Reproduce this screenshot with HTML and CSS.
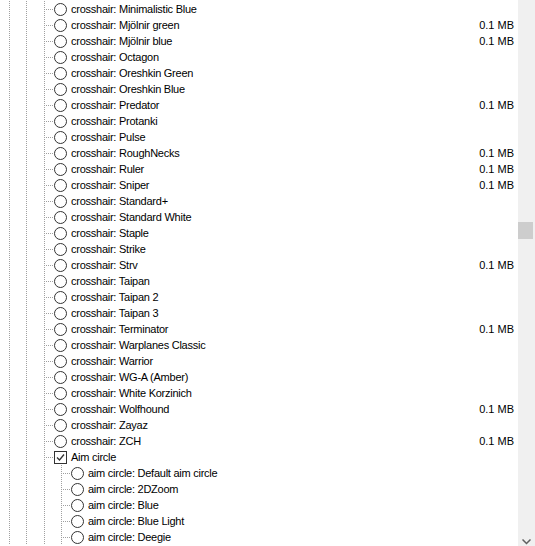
FILE: index.html
```html
<!DOCTYPE html>
<html lang="en">
<head>
    <meta charset="UTF-8">
    <title>Mod tree</title>
    <link rel="stylesheet" href="styles.css">
</head>
<body>
    <div class="panel">
        <div class="tree" id="tree"></div>
        <div class="scrollbar">
            <div class="track"><div class="thumb"></div></div>
            <div class="arrow">
                <svg width="9" height="6" viewBox="0 0 9 6"><path d="M0.5 0.5 L4.5 4.5 L8.5 0.5" fill="none" stroke="#606060" stroke-width="1.5"/></svg>
            </div>
        </div>
    </div>

    <script>
        const crosshairs = [
            ['Minimalistic Blue', ''], ['Mjölnir green', '0.1 MB'], ['Mjölnir blue', '0.1 MB'],
            ['Octagon', ''], ['Oreshkin Green', ''], ['Oreshkin Blue', ''], ['Predator', '0.1 MB'],
            ['Protanki', ''], ['Pulse', ''], ['RoughNecks', '0.1 MB'], ['Ruler', '0.1 MB'],
            ['Sniper', '0.1 MB'], ['Standard+', ''], ['Standard White', ''], ['Staple', ''],
            ['Strike', ''], ['Strv', '0.1 MB'], ['Taipan', ''], ['Taipan 2', ''], ['Taipan 3', ''],
            ['Terminator', '0.1 MB'], ['Warplanes Classic', ''], ['Warrior', ''], ['WG-A (Amber)', ''],
            ['White Korzinich', ''], ['Wolfhound', '0.1 MB'], ['Zayaz', ''], ['ZCH', '0.1 MB']
        ];
        const aimCircles = ['Default aim circle', '2DZoom', 'Blue', 'Blue Light', 'Deegie'];

        const checkSvg = '<svg width="11" height="11" viewBox="0 0 11 11"><path d="M2 5.5 L4.5 8 L9 2.5" fill="none" stroke="#333" stroke-width="1.3"/></svg>';

        function row(guides, box, label, size) {
            let html = '<div class="row">';
            guides.forEach(g => { html += `<span class="guide ${g}"></span>`; });
            html += box === 'check' ? `<span class="check">${checkSvg}</span>` : '<span class="radio"></span>';
            html += `<span class="label">${label}</span>`;
            html += `<span class="size">${size}</span></div>`;
            return html;
        }

        let out = '';
        crosshairs.forEach(([name, size]) => {
            out += row(['line', 'line', 'tee'], 'radio', 'crosshair: ' + name, size);
        });
        out += row(['line', 'line', 'tee'], 'check', 'Aim circle', '');
        aimCircles.forEach(name => {
            out += row(['line', 'line', 'line', 'tee sub'], 'radio', 'aim circle: ' + name, '');
        });
        document.getElementById('tree').innerHTML = out;
    </script>
</body>
</html>
```

FILE: styles.css
```css
body {
    margin: 0;
    font-family: "Liberation Sans", Arial, sans-serif;
    font-size: 11px;
    color: #000;
    background: #fff;
}
.panel {
    display: flex;
    height: 546px;
    overflow: hidden;
}
.tree {
    flex: 1;
    padding-top: 1px;
}
.row {
    display: flex;
    align-items: center;
    height: 16px;
}
.guide {
    width: 18px;
    height: 16px;
    flex-shrink: 0;
    background: repeating-linear-gradient(#a0a0a0 0 1px, transparent 1px 2px) 9px 0 / 1px 16px no-repeat;
}
.guide:first-child {
    width: 17px;
}
.guide.tee {
    background:
        repeating-linear-gradient(#a0a0a0 0 1px, transparent 1px 2px) 9px 0 / 1px 16px no-repeat,
        repeating-linear-gradient(to right, #a0a0a0 0 1px, transparent 1px 2px) 9px 8px / 9px 1px no-repeat;
}
.guide.sub {
    width: 17px;
    background:
        repeating-linear-gradient(#a0a0a0 0 1px, transparent 1px 2px) 8px 0 / 1px 16px no-repeat,
        repeating-linear-gradient(to right, #a0a0a0 0 1px, transparent 1px 2px) 8px 8px / 9px 1px no-repeat;
}
.radio {
    width: 11px;
    height: 11px;
    border: 1px solid #333;
    border-radius: 50%;
    margin-left: 1px;
    flex-shrink: 0;
}
.check {
    display: flex;
    align-items: center;
    justify-content: center;
    width: 11px;
    height: 11px;
    border: 1px solid #333;
    margin-left: 1px;
    flex-shrink: 0;
}
.label {
    flex: 1;
    margin-left: 4px;
    white-space: nowrap;
    letter-spacing: -0.25px;
}
.size {
    padding-right: 4px;
    white-space: nowrap;
}
.scrollbar {
    width: 17px;
    display: flex;
    flex-direction: column;
    background: #f0f0f0;
}
.track {
    flex: 1;
    padding-top: 222px;
}
.thumb {
    width: 15px;
    height: 17px;
    background: #cdcdcd;
}
.arrow {
    height: 17px;
    display: flex;
    justify-content: center;
    align-items: flex-start;
    box-sizing: border-box;
    padding-top: 10px;
}
```
